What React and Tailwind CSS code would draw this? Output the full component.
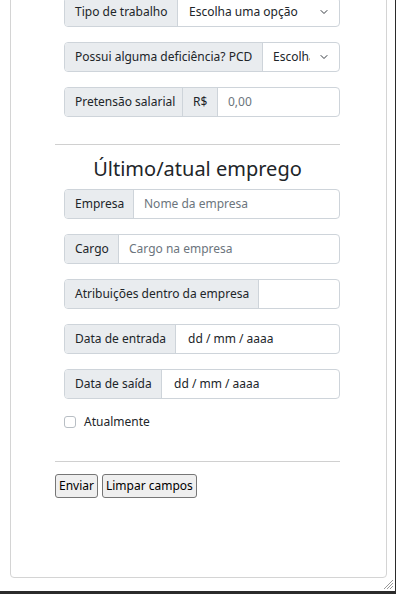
import React from "react";

const font = { fontFamily: '"Noto Sans", "Open Sans", sans-serif' };

function Chevron() {
  return (
    <svg width="10" height="8" viewBox="0 0 16 16" className="shrink-0">
      <path d="m2 5 6 6 6-6" fill="none" stroke="#343a40" strokeWidth="2" strokeLinecap="round" strokeLinejoin="round" />
    </svg>
  );
}

function Addon({ children, className = "" }) {
  return (
    <div className={"flex items-center shrink-0 bg-[#e9ecef] border-[#ced4da] px-[10px] text-[#212529] whitespace-nowrap " + className}>
      {children}
    </div>
  );
}

function Row({ children }) {
  return (
    <div className="flex h-[30px] mb-[15px] ml-[9px] border border-[#ced4da] rounded-[4px] overflow-hidden text-[12px] leading-none">
      {children}
    </div>
  );
}

export default function App() {
  return (
    <div className="relative w-[396px] h-[594px] overflow-hidden bg-white border-r border-b-[3px] border-[#2b2b2b]" style={font}>
      <div className="flex flex-col ml-[10px] w-[377px] mt-[-20px] pt-[16px] pb-[79px] pl-[44px] pr-[46px] border border-[#d4d4d4] rounded-[4px]">
        <Row>
          <Addon className="border-r w-[113px]">Tipo de trabalho</Addon>
          <div className="flex-1 flex items-center justify-between pl-[11px] pr-[10px] text-[#212529]">
            <span>Escolha uma opção</span>
            <Chevron />
          </div>
        </Row>
        <Row>
          <Addon className="border-r w-[198px]">Possui alguma deficiência? PCD</Addon>
          <div className="flex-1 flex items-center justify-between pl-[10px] pr-[10px] text-[#212529] overflow-hidden">
            <span className="overflow-hidden w-[37px] whitespace-nowrap">Escolha uma opção</span>
            <Chevron />
          </div>
        </Row>
        <Row>
          <Addon className="border-r w-[118px]">Pretensão salarial</Addon>
          <Addon className="border-r w-[35px]">R$</Addon>
          <div className="flex-1 flex items-center pl-[10px] text-[#6c757d]">0,00</div>
        </Row>

        <div className="h-px bg-[#d0d0d0] mt-[12px]" />
        <div className="text-center text-[20px] leading-[26px] text-[#212529] mt-[11px] mb-[7px]">Último/atual emprego</div>

        <Row>
          <Addon className="border-r w-[69px]">Empresa</Addon>
          <div className="flex-1 flex items-center pl-[10px] text-[#6c757d]">Nome da empresa</div>
        </Row>
        <Row>
          <Addon className="border-r w-[54px]">Cargo</Addon>
          <div className="flex-1 flex items-center pl-[10px] text-[#6c757d]">Cargo na empresa</div>
        </Row>
        <Row>
          <Addon className="border-r w-[194px]">Atribuições dentro da empresa</Addon>
          <div className="flex-1" />
        </Row>
        <Row>
          <Addon className="border-r w-[111px]">Data de entrada</Addon>
          <div className="flex-1 flex items-center pl-[12px] text-[#212529]">dd / mm / aaaa</div>
        </Row>
        <Row>
          <Addon className="border-r w-[97px]">Data de saída</Addon>
          <div className="flex-1 flex items-center pl-[12px] text-[#212529]">dd / mm / aaaa</div>
        </Row>

        <div className="flex items-center h-[12px] ml-[9px] mt-[2px] text-[12px] leading-none text-[#212529]">
          <div className="w-[12px] h-[12px] border border-[#b8bec4] rounded-[3px] bg-white" />
          <span className="ml-[8px]">Atualmente</span>
        </div>

        <div className="h-px bg-[#d0d0d0] mt-[33px]" />

        <div className="flex gap-[4px] mt-[12px]">
          <button className="h-[24px] px-[3px] bg-[#efefef] border border-[#767676] rounded-[3px] text-[12px] text-black leading-none">Enviar</button>
          <button className="h-[24px] px-[3px] bg-[#efefef] border border-[#767676] rounded-[3px] text-[12px] text-black leading-none">Limpar campos</button>
        </div>
      </div>

      <svg className="absolute right-[1px] bottom-[1px]" width="12" height="12" viewBox="0 0 12 12">
        <path d="M11 2 2 11M11 5 5 11M11 8 8 11" stroke="#9a9a9a" strokeWidth="1" />
      </svg>
    </div>
  );
}
